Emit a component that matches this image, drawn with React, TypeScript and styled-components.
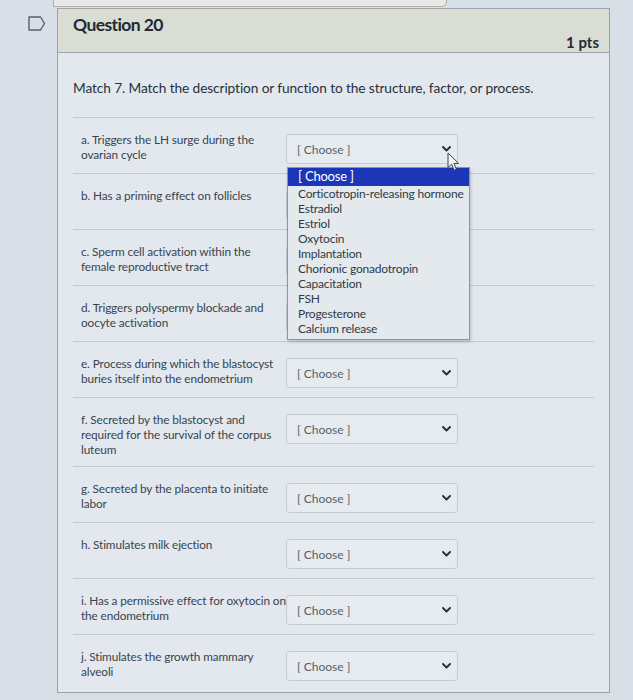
import React from "react";
import styled, { createGlobalStyle } from "styled-components";

const GlobalStyle = createGlobalStyle`
  html, body {
    margin: 0;
    padding: 0;
    background: #d8dfe6;
    font-family: Lato, "Open Sans", "Liberation Sans", sans-serif;
    color: #2d3a45;
  }
`;

const Page = styled.div`
  width: 633px;
  height: 700px;
  overflow: hidden;
  background: #d8dfe6;
`;

const PrevStub = styled.div`
  margin-left: 53px;
  width: 392px;
  height: 6px;
  background: #e6e9e8;
  border: 1px solid #b9ad9f;
  border-top: none;
  border-radius: 0 0 5px 0;
`;

const QuestionWrap = styled.div`
  display: flex;
  margin-top: 1px;
`;

const FlagCol = styled.div`
  width: 57px;
  flex: none;
  padding: 7px 0 0 28px;
  box-sizing: border-box;
`;

const Panel = styled.div`
  width: 553px;
  border: 1px solid #9aa3a9;
  background: #e2e8ee;
  box-sizing: border-box;
`;

const Header = styled.div`
  height: 44px;
  box-sizing: border-box;
  display: flex;
  justify-content: space-between;
  padding: 5px 10px 1px 15px;
  background: #d9ddd3;
  border-bottom: 1px solid #9aa3a9;
`;

const Title = styled.h2`
  margin: 0;
  align-self: flex-start;
  font-size: 17.5px;
  line-height: 22px;
  font-weight: 700;
  letter-spacing: -0.6px;
  color: #1f2a33;
`;

const Points = styled.div`
  align-self: flex-end;
  font-size: 15px;
  line-height: 18px;
  font-weight: 700;
  color: #1f2a33;
`;

const Body = styled.div`
  padding: 25px 15px 2px 15px;
`;

const Prompt = styled.p`
  margin: 0 0 19px 0;
  font-size: 13.7px;
  line-height: 20px;
  color: #25313b;
  letter-spacing: -0.1px;
`;

const Row = styled.div`
  display: grid;
  grid-template-columns: 205px 172px;
  align-items: start;
  padding: 14px 0 9px 8px;
  border-top: 1px solid #c3cad0;
`;

const Desc = styled.div`
  font-size: 11.8px;
  line-height: 15px;
  letter-spacing: -0.12px;
  color: #38444e;
  white-space: nowrap;
`;

const Select = styled.div<{ $covered?: boolean }>`
  position: relative;
  margin-top: 2px;
  height: 30px;
  box-sizing: border-box;
  display: flex;
  align-items: center;
  justify-content: space-between;
  padding: 0 6px 0 10px;
  background: #e6ebf0;
  border: 1px solid #c5ccd2;
  border-radius: 3px;
  font-size: 12px;
  color: #56616b;

  & > * {
    visibility: ${(p) => (p.$covered ? "hidden" : "visible")};
  }
`;

const Dropdown = styled.ul`
  position: absolute;
  z-index: 5;
  left: 0;
  top: 32px;
  width: 181px;
  margin: 0;
  padding: 0 0 3px 0;
  list-style: none;
  background: #e4e9ee;
  border: 1px solid #8f979d;
  box-shadow: 1px 2px 3px rgba(0, 0, 0, 0.18);
`;

const Option = styled.li<{ $active?: boolean }>`
  padding: ${(p) => (p.$active ? "1px 0 2px 10px" : "0 0 0 10px")};
  font-size: ${(p) => (p.$active ? "13px" : "12px")};
  line-height: 15px;
  letter-spacing: -0.2px;
  white-space: nowrap;
  color: ${(p) => (p.$active ? "#ffffff" : "#2f3b45")};
  background: ${(p) => (p.$active ? "#1c36b8" : "transparent")};
`;

const Cursor = styled.svg`
  position: absolute;
  z-index: 6;
  left: 160px;
  top: 17px;
`;

const FlagIcon = () => (
  <svg width="18" height="15" viewBox="0 0 18 15">
    <path
      d="M1 1 H12.5 L16.5 7.5 L12.5 14 H1 Z"
      fill="none"
      stroke="#56616b"
      strokeWidth="1.4"
      strokeLinejoin="round"
    />
  </svg>
);

const Chevron = () => (
  <svg width="9" height="6" viewBox="0 0 9 6">
    <path
      d="M1 1 L4.5 4.5 L8 1"
      fill="none"
      stroke="#26323c"
      strokeWidth="1.9"
      strokeLinecap="round"
      strokeLinejoin="round"
    />
  </svg>
);

const options = [
  "Corticotropin-releasing hormone",
  "Estradiol",
  "Estriol",
  "Oxytocin",
  "Implantation",
  "Chorionic gonadotropin",
  "Capacitation",
  "FSH",
  "Progesterone",
  "Calcium release",
];

const rows: string[][] = [
  ["a. Triggers the LH surge during the", "ovarian cycle"],
  ["b. Has a priming effect on follicles"],
  ["c. Sperm cell activation within the", "female reproductive tract"],
  ["d. Triggers polyspermy blockade and", "oocyte activation"],
  ["e. Process during which the blastocyst", "buries itself into the endometrium"],
  ["f. Secreted by the blastocyst and", "required for the survival of the corpus", "luteum"],
  ["g. Secreted by the placenta to initiate", "labor"],
  ["h. Stimulates milk ejection"],
  ["i. Has a permissive effect for oxytocin on", "the endometrium"],
  ["j. Stimulates the growth mammary", "alveoli"],
];

export default function App() {
  return (
    <Page>
      <GlobalStyle />
      <PrevStub />
      <QuestionWrap>
        <FlagCol>
          <FlagIcon />
        </FlagCol>
        <Panel>
          <Header>
            <Title>Question 20</Title>
            <Points>1 pts</Points>
          </Header>
          <Body>
            <Prompt>
              Match 7. Match the description or function to the structure, factor, or process.
            </Prompt>
            {rows.map((lines, i) => (
              <Row key={i}>
                <Desc>
                  {lines.map((l, j) => (
                    <React.Fragment key={j}>
                      {j > 0 && <br />}
                      {l}
                    </React.Fragment>
                  ))}
                </Desc>
                <Select $covered={i >= 1 && i <= 3}>
                  <span>[ Choose ]</span>
                  <Chevron />
                  {i === 0 && (
                    <>
                      <Dropdown>
                        <Option $active>[ Choose ]</Option>
                        {options.map((o) => (
                          <Option key={o}>{o}</Option>
                        ))}
                      </Dropdown>
                      <Cursor width="13" height="20" viewBox="0 0 13 20">
                        <path
                          d="M1 1 L1 15.5 L4.6 12.2 L7.2 18.2 L9.4 17.2 L6.9 11.4 L11.6 11.4 Z"
                          fill="#f4f6f8"
                          stroke="#3a434b"
                          strokeWidth="1"
                          strokeLinejoin="round"
                        />
                      </Cursor>
                    </>
                  )}
                </Select>
              </Row>
            ))}
          </Body>
        </Panel>
      </QuestionWrap>
    </Page>
  );
}
